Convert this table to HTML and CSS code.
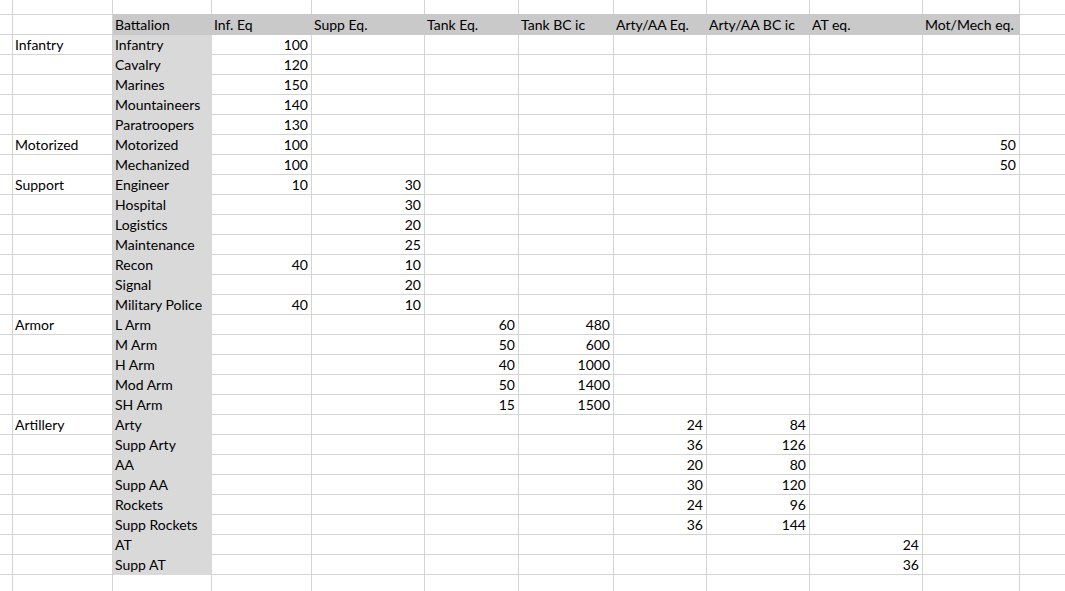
FILE: index.html
```html
<!DOCTYPE html>
<html>
<head>
<meta charset="utf-8">
<link rel="stylesheet" href="styles.css">
</head>
<body>
<table class="sheet">
<colgroup>
<col class="c0"><col class="ca"><col class="cb"><col class="cc"><col class="cd"><col class="ce"><col class="cf"><col class="cg"><col class="ch"><col class="ci"><col class="cj"><col class="ck">
</colgroup>
<tr class="r0"><td></td><td></td><td class="top"></td><td class="top"></td><td class="top"></td><td class="top"></td><td class="top"></td><td class="top"></td><td class="top"></td><td class="top"></td><td class="top"></td><td></td></tr>
<tr class="hdr"><td></td><td></td><td class="h">Battalion</td><td class="h">Inf. Eq</td><td class="h">Supp Eq.</td><td class="h">Tank Eq.</td><td class="h">Tank BC ic</td><td class="h">Arty/AA Eq.</td><td class="h">Arty/AA BC ic</td><td class="h">AT eq.</td><td class="h">Mot/Mech eq.</td><td></td></tr>
<tr><td></td><td>Infantry</td><td class="b">Infantry</td><td class="n">100</td><td></td><td></td><td></td><td></td><td></td><td></td><td></td><td></td></tr>
<tr><td></td><td></td><td class="b">Cavalry</td><td class="n">120</td><td></td><td></td><td></td><td></td><td></td><td></td><td></td><td></td></tr>
<tr><td></td><td></td><td class="b">Marines</td><td class="n">150</td><td></td><td></td><td></td><td></td><td></td><td></td><td></td><td></td></tr>
<tr><td></td><td></td><td class="b">Mountaineers</td><td class="n">140</td><td></td><td></td><td></td><td></td><td></td><td></td><td></td><td></td></tr>
<tr><td></td><td></td><td class="b">Paratroopers</td><td class="n">130</td><td></td><td></td><td></td><td></td><td></td><td></td><td></td><td></td></tr>
<tr><td></td><td>Motorized</td><td class="b">Motorized</td><td class="n">100</td><td></td><td></td><td></td><td></td><td></td><td></td><td class="n">50</td><td></td></tr>
<tr><td></td><td></td><td class="b">Mechanized</td><td class="n">100</td><td></td><td></td><td></td><td></td><td></td><td></td><td class="n">50</td><td></td></tr>
<tr><td></td><td>Support</td><td class="b">Engineer</td><td class="n">10</td><td class="n">30</td><td></td><td></td><td></td><td></td><td></td><td></td><td></td></tr>
<tr><td></td><td></td><td class="b">Hospital</td><td></td><td class="n">30</td><td></td><td></td><td></td><td></td><td></td><td></td><td></td></tr>
<tr><td></td><td></td><td class="b">Logistics</td><td></td><td class="n">20</td><td></td><td></td><td></td><td></td><td></td><td></td><td></td></tr>
<tr><td></td><td></td><td class="b">Maintenance</td><td></td><td class="n">25</td><td></td><td></td><td></td><td></td><td></td><td></td><td></td></tr>
<tr><td></td><td></td><td class="b">Recon</td><td class="n">40</td><td class="n">10</td><td></td><td></td><td></td><td></td><td></td><td></td><td></td></tr>
<tr><td></td><td></td><td class="b">Signal</td><td></td><td class="n">20</td><td></td><td></td><td></td><td></td><td></td><td></td><td></td></tr>
<tr><td></td><td></td><td class="b">Military Police</td><td class="n">40</td><td class="n">10</td><td></td><td></td><td></td><td></td><td></td><td></td><td></td></tr>
<tr><td></td><td>Armor</td><td class="b">L Arm</td><td></td><td></td><td class="n">60</td><td class="n">480</td><td></td><td></td><td></td><td></td><td></td></tr>
<tr><td></td><td></td><td class="b">M Arm</td><td></td><td></td><td class="n">50</td><td class="n">600</td><td></td><td></td><td></td><td></td><td></td></tr>
<tr><td></td><td></td><td class="b">H Arm</td><td></td><td></td><td class="n">40</td><td class="n">1000</td><td></td><td></td><td></td><td></td><td></td></tr>
<tr><td></td><td></td><td class="b">Mod Arm</td><td></td><td></td><td class="n">50</td><td class="n">1400</td><td></td><td></td><td></td><td></td><td></td></tr>
<tr><td></td><td></td><td class="b">SH Arm</td><td></td><td></td><td class="n">15</td><td class="n">1500</td><td></td><td></td><td></td><td></td><td></td></tr>
<tr><td></td><td>Artillery</td><td class="b">Arty</td><td></td><td></td><td></td><td></td><td class="n">24</td><td class="n">84</td><td></td><td></td><td></td></tr>
<tr><td></td><td></td><td class="b">Supp Arty</td><td></td><td></td><td></td><td></td><td class="n">36</td><td class="n">126</td><td></td><td></td><td></td></tr>
<tr><td></td><td></td><td class="b">AA</td><td></td><td></td><td></td><td></td><td class="n">20</td><td class="n">80</td><td></td><td></td><td></td></tr>
<tr><td></td><td></td><td class="b">Supp AA</td><td></td><td></td><td></td><td></td><td class="n">30</td><td class="n">120</td><td></td><td></td><td></td></tr>
<tr><td></td><td></td><td class="b">Rockets</td><td></td><td></td><td></td><td></td><td class="n">24</td><td class="n">96</td><td></td><td></td><td></td></tr>
<tr><td></td><td></td><td class="b">Supp Rockets</td><td></td><td></td><td></td><td></td><td class="n">36</td><td class="n">144</td><td></td><td></td><td></td></tr>
<tr><td></td><td></td><td class="b">AT</td><td></td><td></td><td></td><td></td><td></td><td></td><td class="n">24</td><td></td><td></td></tr>
<tr><td></td><td></td><td class="b">Supp AT</td><td></td><td></td><td></td><td></td><td></td><td></td><td class="n">36</td><td></td><td></td></tr>
<tr><td></td><td></td><td></td><td></td><td></td><td></td><td></td><td></td><td></td><td></td><td></td><td></td></tr>
</table>
</body>
</html>
```

FILE: styles.css
```css
html, body {
  margin: 0;
  padding: 0;
  background: #ffffff;
  overflow: hidden;
}

.sheet {
  border-collapse: separate;
  border-spacing: 0;
  table-layout: fixed;
  width: 1080px;
  font-family: Lato, "Noto Sans", sans-serif;
  font-size: 14px;
  color: #000000;
}

.c0 { width: 13px; }
.ca { width: 100px; }
.cb { width: 99px; }
.cc { width: 100px; }
.cd { width: 113px; }
.ce { width: 94px; }
.cf { width: 95px; }
.cg { width: 93px; }
.ch { width: 103px; }
.ci { width: 113px; }
.cj { width: 97px; }
.ck { width: 60px; }

.sheet td {
  height: 18px;
  padding: 0 3px 1px 2px;
  border-right: 1px solid #d4d4d4;
  border-bottom: 1px solid #d4d4d4;
  vertical-align: bottom;
  white-space: nowrap;
  overflow: hidden;
  line-height: 17px;
}

.sheet .r0 td {
  height: 13px;
}

.sheet td.top {
  border-bottom-color: #c9c9c9;
}

.sheet td.h {
  background: #c9c9c9;
  border-right-color: #c9c9c9;
  border-bottom-color: #c9c9c9;
}

.sheet td.b {
  background: #d9d9d9;
  border-right-color: #d9d9d9;
  border-bottom-color: #d9d9d9;
}

.sheet td.n {
  text-align: right;
}
```
